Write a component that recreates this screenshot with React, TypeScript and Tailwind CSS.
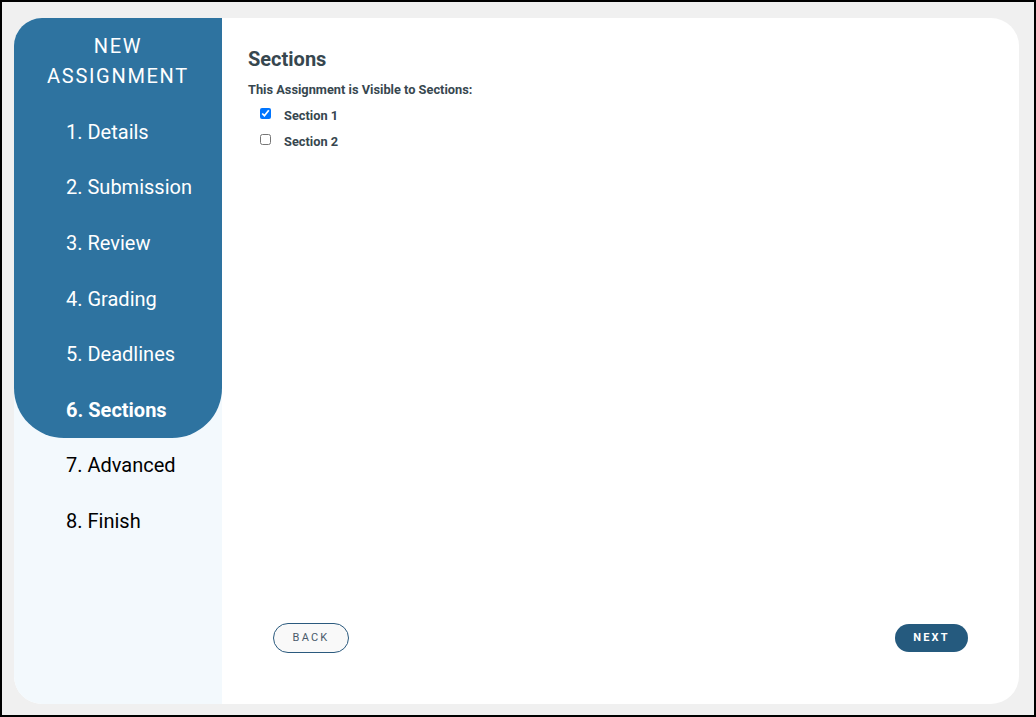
import { useState } from 'react';

const steps = [
  'Details',
  'Submission',
  'Review',
  'Grading',
  'Deadlines',
  'Sections',
  'Advanced',
  'Finish',
];

const ACTIVE = 5;

const App = () => {
  const [sections, setSections] = useState([
    { name: 'Section 1', checked: true },
    { name: 'Section 2', checked: false },
  ]);

  const toggle = (i: number) =>
    setSections((prev) => prev.map((s, j) => (j === i ? { ...s, checked: !s.checked } : s)));

  return (
    <div
      className="w-full h-[717px] border-2 border-black bg-[#f0f0f0] pl-[12px] pt-[16px] pr-[15px] pb-[11px]"
      style={{ fontFamily: 'Roboto, "Noto Sans", sans-serif' }}
    >
      <div className="flex h-full rounded-[28px] overflow-hidden bg-white">
        {/* Wizard steps */}
        <aside className="w-[208px] shrink-0 bg-[#f3f9fd] flex flex-col">
          <div className="bg-[#2e73a0] rounded-b-[50px] pt-[13px]">
            <h1 className="text-center text-white text-[20px] leading-[30px] tracking-[0.085em] font-normal">
              NEW
              <br />
              ASSIGNMENT
            </h1>
            <nav className="mt-[13px]">
              {steps.slice(0, 6).map((step, i) => (
                <div
                  key={step}
                  className={`h-[55.6px] flex items-center pl-[52px] text-[20px] text-white ${
                    i === ACTIVE ? 'font-bold' : 'font-normal'
                  }`}
                >
                  {i + 1}. {step}
                </div>
              ))}
            </nav>
          </div>
          {steps.slice(6).map((step, i) => (
            <div key={step} className="h-[55.6px] flex items-center pl-[52px] text-[20px] text-black">
              {i + 7}. {step}
            </div>
          ))}
        </aside>

        {/* Step content */}
        <main className="flex-1 flex flex-col pl-[26px] pt-[27px]">
          <h2 className="text-[20px] leading-[28px] font-bold text-[#37474f]">Sections</h2>
          <p className="mt-[9px] text-[12.8px] leading-[16px] font-bold text-[#37474f]">
            This Assignment is Visible to Sections:
          </p>
          <div className="mt-[5px] pl-[12px]">
            {sections.map((s, i) => (
              <label key={s.name} className="h-[26px] flex items-center text-[12.8px] font-bold text-[#37474f]">
                <input
                  type="checkbox"
                  checked={s.checked}
                  onChange={() => toggle(i)}
                  className="w-[11px] h-[11px] m-0 -mt-[6px]"
                />
                <span className="ml-[13px]">{s.name}</span>
              </label>
            ))}
          </div>

          <div className="flex-1" />

          <div className="flex justify-between items-center pl-[25px] pr-[51px] pb-[51px]">
            <button className="h-[30px] w-[76px] rounded-full border border-[#2b5a7e] bg-[#f9f9f9] text-[11px] tracking-[0.2em] text-[#4a5a6a]">
              BACK
            </button>
            <button className="h-[28px] w-[73px] rounded-full bg-[#255a7e] text-[11px] font-bold tracking-[0.2em] text-white">
              NEXT
            </button>
          </div>
        </main>
      </div>
    </div>
  );
};

export default App;
